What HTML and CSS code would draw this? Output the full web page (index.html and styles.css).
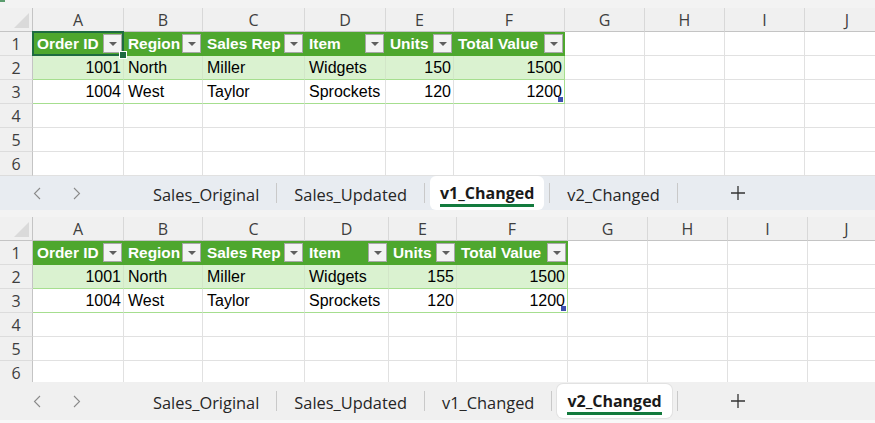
FILE: index.html
```html
<!DOCTYPE html>
<html lang="en">
<head>
    <meta charset="UTF-8">
    <title>Sales sheets</title>
    <link rel="stylesheet" href="styles.css">
</head>
<body>
    <!-- WINDOW 1: v1_Changed -->
    <div class="window window-a">
        <div class="strip"><span class="strip-mark"></span></div>
        <div class="grid grid-a">
            <div class="corner"><span class="corner-tri"></span></div>
            <div class="ch">A</div><div class="ch">B</div><div class="ch">C</div><div class="ch">D</div><div class="ch">E</div>
            <div class="ch">F</div><div class="ch">G</div><div class="ch">H</div><div class="ch">I</div><div class="ch">J</div>

            <div class="rh">1</div>
            <div class="c th sel">Order ID<span class="filter"></span><span class="sel-box"><span class="sel-handle"></span></span></div>
            <div class="c th">Region<span class="filter"></span></div>
            <div class="c th">Sales Rep<span class="filter"></span></div>
            <div class="c th">Item<span class="filter"></span></div>
            <div class="c th">Units<span class="filter"></span></div>
            <div class="c th">Total Value<span class="filter"></span></div>
            <div class="c"></div><div class="c"></div><div class="c"></div><div class="c"></div>

            <div class="rh">2</div>
            <div class="c band num">1001</div><div class="c band">North</div><div class="c band">Miller</div>
            <div class="c band">Widgets</div><div class="c band num">150</div><div class="c band num edge">1500</div>
            <div class="c"></div><div class="c"></div><div class="c"></div><div class="c"></div>

            <div class="rh">3</div>
            <div class="c last num">1004</div><div class="c last">West</div><div class="c last">Taylor</div>
            <div class="c last">Sprockets</div><div class="c last num">120</div><div class="c last num edge mark">1200<span class="size-grip"></span></div>
            <div class="c"></div><div class="c"></div><div class="c"></div><div class="c"></div>

            <div class="rh">4</div>
            <div class="c"></div><div class="c"></div><div class="c"></div><div class="c"></div><div class="c"></div>
            <div class="c"></div><div class="c"></div><div class="c"></div><div class="c"></div><div class="c"></div>
            <div class="rh">5</div>
            <div class="c"></div><div class="c"></div><div class="c"></div><div class="c"></div><div class="c"></div>
            <div class="c"></div><div class="c"></div><div class="c"></div><div class="c"></div><div class="c"></div>
            <div class="rh">6</div>
            <div class="c"></div><div class="c"></div><div class="c"></div><div class="c"></div><div class="c"></div>
            <div class="c"></div><div class="c"></div><div class="c"></div><div class="c"></div><div class="c"></div>
        </div>

        <div class="tabbar">
            <div class="nav">
                <span class="nav-btn"><svg width="8" height="13" viewBox="0 0 8 13"><path d="M7 1 L1.5 6.5 L7 12" fill="none" stroke="#8a8a8a" stroke-width="1.1"/></svg></span>
                <span class="nav-btn"><svg width="8" height="13" viewBox="0 0 8 13"><path d="M1 1 L6.5 6.5 L1 12" fill="none" stroke="#8a8a8a" stroke-width="1.1"/></svg></span>
            </div>
            <div class="tab"><span class="tab-label">Sales_Original</span></div>
            <span class="sep"></span>
            <div class="tab"><span class="tab-label">Sales_Updated</span></div>
            <span class="sep"></span>
            <div class="tab active"><span class="tab-label">v1_Changed</span></div>
            <span class="sep"></span>
            <div class="tab"><span class="tab-label">v2_Changed</span></div>
            <span class="sep"></span>
            <span class="add"><svg width="16" height="16" viewBox="0 0 16 16"><path d="M8 1 V15 M1 8 H15" stroke="#333" stroke-width="1.3"/></svg></span>
        </div>
    </div>

    <!-- WINDOW 2: v2_Changed -->
    <div class="window window-b">
        <div class="strip"></div>
        <div class="grid grid-b">
            <div class="corner"><span class="corner-tri"></span></div>
            <div class="ch">A</div><div class="ch">B</div><div class="ch">C</div><div class="ch">D</div><div class="ch">E</div>
            <div class="ch">F</div><div class="ch">G</div><div class="ch">H</div><div class="ch">I</div><div class="ch">J</div>

            <div class="rh">1</div>
            <div class="c th">Order ID<span class="filter"></span></div>
            <div class="c th">Region<span class="filter"></span></div>
            <div class="c th">Sales Rep<span class="filter"></span></div>
            <div class="c th">Item<span class="filter"></span></div>
            <div class="c th">Units<span class="filter"></span></div>
            <div class="c th">Total Value<span class="filter"></span></div>
            <div class="c"></div><div class="c"></div><div class="c"></div><div class="c"></div>

            <div class="rh">2</div>
            <div class="c band num">1001</div><div class="c band">North</div><div class="c band">Miller</div>
            <div class="c band">Widgets</div><div class="c band num">155</div><div class="c band num edge">1500</div>
            <div class="c"></div><div class="c"></div><div class="c"></div><div class="c"></div>

            <div class="rh">3</div>
            <div class="c last num">1004</div><div class="c last">West</div><div class="c last">Taylor</div>
            <div class="c last">Sprockets</div><div class="c last num">120</div><div class="c last num edge mark">1200<span class="size-grip"></span></div>
            <div class="c"></div><div class="c"></div><div class="c"></div><div class="c"></div>

            <div class="rh">4</div>
            <div class="c"></div><div class="c"></div><div class="c"></div><div class="c"></div><div class="c"></div>
            <div class="c"></div><div class="c"></div><div class="c"></div><div class="c"></div><div class="c"></div>
            <div class="rh">5</div>
            <div class="c"></div><div class="c"></div><div class="c"></div><div class="c"></div><div class="c"></div>
            <div class="c"></div><div class="c"></div><div class="c"></div><div class="c"></div><div class="c"></div>
            <div class="rh">6</div>
            <div class="c"></div><div class="c"></div><div class="c"></div><div class="c"></div><div class="c"></div>
            <div class="c"></div><div class="c"></div><div class="c"></div><div class="c"></div><div class="c"></div>
        </div>

        <div class="tabbar tabbar-b">
            <div class="nav">
                <span class="nav-btn"><svg width="8" height="13" viewBox="0 0 8 13"><path d="M7 1 L1.5 6.5 L7 12" fill="none" stroke="#8a8a8a" stroke-width="1.1"/></svg></span>
                <span class="nav-btn"><svg width="8" height="13" viewBox="0 0 8 13"><path d="M1 1 L6.5 6.5 L1 12" fill="none" stroke="#8a8a8a" stroke-width="1.1"/></svg></span>
            </div>
            <div class="tab"><span class="tab-label">Sales_Original</span></div>
            <span class="sep"></span>
            <div class="tab"><span class="tab-label">Sales_Updated</span></div>
            <span class="sep"></span>
            <div class="tab"><span class="tab-label">v1_Changed</span></div>
            <span class="sep"></span>
            <div class="tab active"><span class="tab-label">v2_Changed</span></div>
            <span class="sep"></span>
            <span class="add"><svg width="16" height="16" viewBox="0 0 16 16"><path d="M8 1 V15 M1 8 H15" stroke="#333" stroke-width="1.3"/></svg></span>
        </div>
        <div class="foot"></div>
    </div>
</body>
</html>
```

FILE: styles.css
```css
* { margin: 0; padding: 0; box-sizing: border-box; }
body {
    width: 875px;
    height: 423px;
    overflow: hidden;
    background: #fff;
    font-family: "Liberation Sans", Arial, sans-serif;
    color: #000;
}
.window { display: flex; flex-direction: column; overflow: hidden; }
.window-a { height: 210px; }
.window-b { height: 213px; }
.strip { height: 8px; flex: none; background: #f3f3f3; }
.window-b .strip { height: 7px; }
.strip-mark { display: block; width: 5px; height: 2px; background: #5c9d6f; }

/* GRID - the last column runs past the window edge */
.grid { display: grid; grid-auto-rows: 24px; flex: none; overflow: hidden; }
.grid-a { grid-template-columns: 33px 91px 79px 102px 81px 68px 111px 80px 80px 80px 85px; height: 168px; }
.grid-b { grid-template-columns: 33px 91px 79px 102px 84px 68px 111px 80px 80px 80px 78px; height: 165px; }

.corner {
    background: #f0f0f0;
    border-right: 1px solid #c4c4c4;
    border-bottom: 1px solid #c4c4c4;
    display: flex;
    align-items: flex-end;
    justify-content: flex-end;
    padding: 0 3px 3px 0;
}
.corner-tri {
    width: 0; height: 0;
    border-left: 15px solid transparent;
    border-bottom: 15px solid #dadada;
}
.ch, .rh {
    background: #f0f0f0;
    font-family: "Open Sans", sans-serif;
    font-size: 16px;
    color: #3e3e3e;
    display: flex;
    align-items: center;
    justify-content: center;
}
.ch { border-right: 1px solid #d8d8d8; border-bottom: 1px solid #c4c4c4; }
.rh { border-right: 1px solid #c4c4c4; border-bottom: 1px solid #dcdcdc; }

.c {
    border-right: 1px solid #e1e1e1;
    border-bottom: 1px solid #e1e1e1;
    font-size: 16px;
    line-height: 23px;
    padding: 0 4px;
    white-space: nowrap;
    overflow: visible;
}
.num { text-align: right; padding-right: 2px; }

.th {
    background: #4ea72e;
    border-right-color: #4ea72e;
    border-bottom-color: #4ea72e;
    color: #fff;
    font-weight: bold;
    font-size: 15.4px;
    display: flex;
    align-items: center;
    justify-content: space-between;
    padding: 0 1px 0 4px;
}
.filter {
    width: 19px;
    height: 19px;
    flex: none;
    background: #f3f3f3;
    border: 1px solid #a8a8a8;
    display: flex;
    align-items: center;
    justify-content: center;
}
.filter::after {
    content: "";
    border-left: 4px solid transparent;
    border-right: 4px solid transparent;
    border-top: 4px solid #5f5f5f;
}
.band { background: #daf2d0; border-bottom-color: #a6de8f; border-right-color: #d2e6c8; }
.last { border-bottom-color: #a6de8f; }
.edge { border-right-color: #a6de8f; }

/* selection and table grip lie over the cells */
.sel, .mark { position: relative; }
.sel-box {
    position: absolute;
    top: -1px; left: -1px; right: -1px; bottom: -1px;
    border: 2px solid #1e6b41;
    z-index: 2;
}
.sel-handle {
    position: absolute;
    right: -5px; bottom: -5px;
    width: 8px; height: 8px;
    background: #1e6b41;
    border: 1px solid #fff;
}
.size-grip {
    position: absolute;
    right: 1px; bottom: 1px;
    width: 5px; height: 5px;
    background: #3e4fae;
}

/* SHEET TABS */
.tabbar {
    height: 34px;
    flex: none;
    background: #e8ecf1;
    display: flex;
    align-items: center;
    font-family: "Open Sans", sans-serif;
    font-size: 16.4px;
    color: #262626;
}
.tabbar-b { height: 38px; background: #f0f0f0; }
.nav { width: 136px; flex: none; display: flex; padding-left: 17px; }
.nav-btn { width: 40px; display: flex; justify-content: center; align-items: center; }
.tab {
    height: 34px;
    margin: 0 5px;
    padding: 3px 12px 0;
    border-radius: 6px;
    display: flex;
    align-items: center;
    white-space: nowrap;
}
.tab-label { line-height: 20px; }
.tab.active { background: #fff; padding: 3px 10px 0; }
.tabbar-b .tab.active { box-shadow: 0 0 0 1px #e2e2e2; }
.tab.active .tab-label {
    font-weight: bold;
    font-size: 16px;
    color: #1a1a1a;
    padding-bottom: 1px;
    border-bottom: 3px solid #137a3d;
}
.sep { width: 1px; height: 20px; background: #c9c9c9; flex: none; }
.add { margin-left: 52px; display: flex; align-items: center; }
.foot { height: 3px; flex: none; background: #f8f8f8; }
```
